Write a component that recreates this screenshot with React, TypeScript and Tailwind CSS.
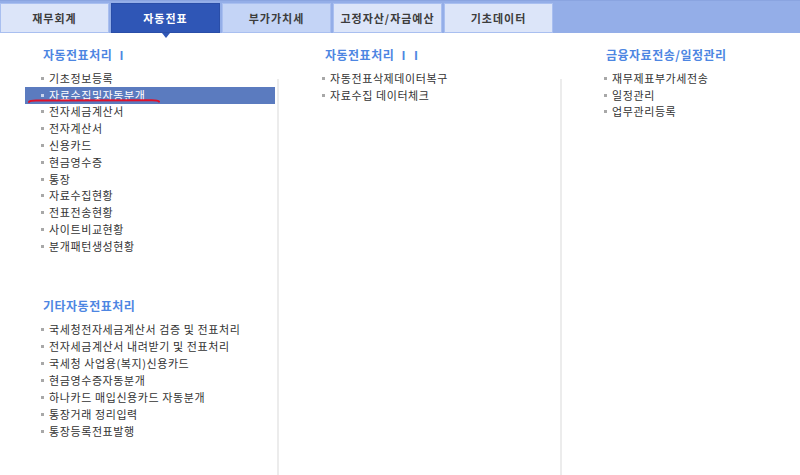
const tabs = [
  { label: '재무회계', active: false, tone: 'bg-[#dce5f9]' },
  { label: '자동전표', active: true, tone: 'bg-[#2f56b6]' },
  { label: '부가가치세', active: false, tone: 'bg-[#c4d4f6]' },
  { label: '고정자산/자금예산', active: false, tone: 'bg-[#dce5f9]' },
  { label: '기초데이터', active: false, tone: 'bg-[#dce5f9]' },
]

const group1 = [
  '기초정보등록',
  '자료수집및자동분개',
  '전자세금계산서',
  '전자계산서',
  '신용카드',
  '현금영수증',
  '통장',
  '자료수집현황',
  '전표전송현황',
  '사이트비교현황',
  '분개패턴생성현황',
]

const group2 = [
  '국세청전자세금계산서 검증 및 전표처리',
  '전자세금계산서 내려받기 및 전표처리',
  '국세청 사업용(복지)신용카드',
  '현금영수증자동분개',
  '하나카드 매입신용카드 자동분개',
  '통장거래 정리입력',
  '통장등록전표발행',
]

const group3 = ['자동전표삭제데이터복구', '자료수집 데이터체크']
const group4 = ['재무제표부가세전송', '일정관리', '업무관리등록']

const font = { fontFamily: '"Noto Sans CJK KR", "Noto Sans", sans-serif' }

const Heading = ({ text }: { text: string }) => (
  <div className="h-[14px] text-[12px] leading-[14px] font-bold text-[#4d86e2] tracking-[0.5px]">{text}</div>
)

const Row = ({ text, selected, h, pad }: { text: string; selected?: boolean; h: string; pad: string }) => (
  <div className={`relative flex items-center ${h} ${pad} ${selected ? 'bg-[#5b7bbf] text-white' : 'text-[#333]'}`}>
    <span className={`mr-[5px] w-[3px] h-[3px] ${selected ? 'bg-[#c8d3ec]' : 'bg-[#a8a8a8]'}`} />
    <span className="text-[11px] leading-none tracking-[0.6px] whitespace-nowrap">{text}</span>
    {selected && (
      <svg className="absolute left-[3px] top-[11px]" width="132" height="6" viewBox="0 0 132 6">
        <path d="M1 4 Q2 2.5 8 2.5 L124 2.3 Q130 2.4 131 3.6" stroke="#e0102a" strokeWidth="2" fill="none" strokeLinecap="round" />
      </svg>
    )}
  </div>
)

export default function App() {
  return (
    <div className="w-[800px] h-[475px] flex flex-col bg-white overflow-hidden" style={font}>
      <div className="h-[33px] bg-[#94aee8] flex gap-[2px] pt-[2px] border-t border-[#8aa4e0]">
        {tabs.map(t => (
          <div
            key={t.label}
            className={`relative w-[109px] h-[30px] flex items-center justify-center border ${t.active ? 'border-[#2a4ea8] text-white' : 'border-[#a9bff0] text-[#3c3c3c]'} ${t.tone}`}
          >
            <span className="text-[11px] font-bold tracking-[1px]">{t.label}</span>
            {t.active && (
              <span className="absolute left-1/2 -translate-x-1/2 top-[29px] w-0 h-0 border-l-[4px] border-r-[4px] border-t-[5px] border-l-transparent border-r-transparent border-t-[#2f56b6]" />
            )}
          </div>
        ))}
      </div>

      <div className="flex flex-1">
        <div className="w-[277px] pt-[15px]">
          <div className="pl-[43px] mb-[8px]"><Heading text="자동전표처리 Ⅰ" /></div>
          <div className="ml-[25px] w-[250px] flex flex-col">
            {group1.map((t, i) => (
              <Row key={t} text={t} selected={i === 1} h="h-[16.8px]" pad="pl-[16px]" />
            ))}
          </div>
          <div className="pl-[43px] mt-[44px] mb-[8px]"><Heading text="기타자동전표처리" /></div>
          <div className="ml-[25px] flex flex-col">
            {group2.map(t => <Row key={t} text={t} h="h-[17px]" pad="pl-[16px]" />)}
          </div>
        </div>

        <div className="w-[2px] mt-[46px] bg-[#ececec]" />

        <div className="w-[281px] pt-[15px]">
          <div className="pl-[46px] mb-[8px]"><Heading text="자동전표처리 ⅠⅠ" /></div>
          <div className="flex flex-col">
            {group3.map(t => <Row key={t} text={t} h="h-[16.8px]" pad="pl-[43px]" />)}
          </div>
        </div>

        <div className="w-[2px] mt-[46px] bg-[#ececec]" />

        <div className="flex-1 pt-[15px]">
          <div className="pl-[44px] mb-[8px]"><Heading text="금융자료전송/일정관리" /></div>
          <div className="flex flex-col">
            {group4.map(t => <Row key={t} text={t} h="h-[16.8px]" pad="pl-[42px]" />)}
          </div>
        </div>
      </div>
    </div>
  )
}
